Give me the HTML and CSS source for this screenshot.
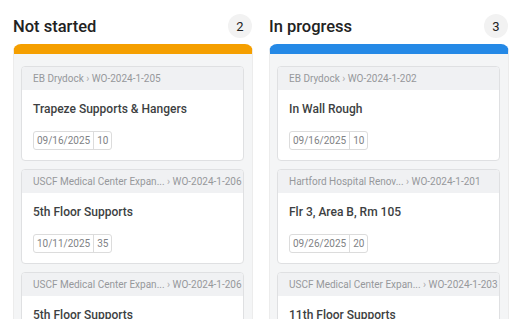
FILE: index.html
```html
<!DOCTYPE html>
<html lang="en">
  <head>
    <meta charset="UTF-8" />
    <meta name="viewport" content="width=device-width, initial-scale=1.0" />
    <title>Work orders</title>
    <link rel="stylesheet" href="styles.css">
  </head>
  <body>
    <div class="board">
      <!-- Not started -->
      <div class="column">
        <div class="column-head">
          <h2>Not started</h2>
          <span class="count">2</span>
        </div>
        <div class="lane lane-orange">
          <div class="card">
            <div class="card-path">EB Drydock <span class="sep">›</span> WO-2024-1-205</div>
            <div class="card-body">
              <div class="card-title">Trapeze Supports &amp; Hangers</div>
              <div class="chip"><span>09/16/2025</span><span>10</span></div>
            </div>
          </div>
          <div class="card">
            <div class="card-path">USCF Medical Center Expan... <span class="sep">›</span> WO-2024-1-206</div>
            <div class="card-body">
              <div class="card-title">5th Floor Supports</div>
              <div class="chip"><span>10/11/2025</span><span>35</span></div>
            </div>
          </div>
          <div class="card">
            <div class="card-path">USCF Medical Center Expan... <span class="sep">›</span> WO-2024-1-206</div>
            <div class="card-body">
              <div class="card-title">5th Floor Supports</div>
              <div class="chip"><span>10/11/2025</span><span>35</span></div>
            </div>
          </div>
        </div>
      </div>

      <!-- In progress -->
      <div class="column">
        <div class="column-head">
          <h2>In progress</h2>
          <span class="count">3</span>
        </div>
        <div class="lane lane-blue">
          <div class="card">
            <div class="card-path">EB Drydock <span class="sep">›</span> WO-2024-1-202</div>
            <div class="card-body">
              <div class="card-title">In Wall Rough</div>
              <div class="chip"><span>09/16/2025</span><span>10</span></div>
            </div>
          </div>
          <div class="card">
            <div class="card-path">Hartford Hospital Renov... <span class="sep">›</span> WO-2024-1-201</div>
            <div class="card-body">
              <div class="card-title">Flr 3, Area B, Rm 105</div>
              <div class="chip"><span>09/26/2025</span><span>20</span></div>
            </div>
          </div>
          <div class="card">
            <div class="card-path">USCF Medical Center Expan... <span class="sep">›</span> WO-2024-1-203</div>
            <div class="card-body">
              <div class="card-title">11th Floor Supports</div>
              <div class="chip"><span>11/02/2025</span><span>25</span></div>
            </div>
          </div>
        </div>
      </div>
    </div>
  </body>
</html>
```

FILE: styles.css
```css
html,
body {
  margin: 0;
  height: 100%;
  overflow: hidden;
  background-color: #fff;
  font-family: Roboto, "Liberation Sans", sans-serif;
}

/* two lanes side by side */
.board {
  display: flex;
  gap: 16px;
  padding: 12px 0 0 13px;
}

.column {
  width: 240px;
  flex-shrink: 0;
}

.column-head {
  display: flex;
  align-items: center;
  justify-content: space-between;
  height: 28px;
  margin-bottom: 4px;
}

h2 {
  margin: 0;
  font-size: 16.5px;
  font-weight: 500;
  color: #222;
}

.count {
  width: 24px;
  height: 24px;
  margin-right: 1px;
  border-radius: 50%;
  background-color: #f2f2f2;
  color: #222;
  font-size: 13px;
  display: flex;
  align-items: center;
  justify-content: center;
}

.lane {
  display: flex;
  flex-direction: column;
  gap: 8px;
  padding: 12px 8px 12px 7px;
  background-color: #f4f5f6;
  border: 1px solid #ececec;
  border-top: 10px solid #f59f00;
  border-radius: 8px 8px 0 0;
  height: 400px;
}

.lane-blue {
  border-top-color: #2589e6;
}

.card {
  flex-shrink: 0;
  background-color: #fff;
  border: 1px solid #dfe0e2;
  border-radius: 4px;
  overflow: hidden;
}

.card-path {
  height: 23px;
  line-height: 23px;
  padding: 0 11px;
  background-color: #f0f1f3;
  color: #96989b;
  font-size: 10px;
  white-space: nowrap;
}

.sep {
  color: #aaa;
}

.card-body {
  padding: 11px 11px 10px 11px;
}

.card-title {
  font-size: 12px;
  font-weight: 500;
  color: #3d3f42;
  line-height: 16px;
  margin-bottom: 14px;
}

.chip {
  display: flex;
  width: fit-content;
  border: 1px solid #dcdcdc;
  border-radius: 3px;
  font-size: 10px;
  color: #808285;
}

.chip span {
  padding: 0 3px;
  line-height: 17px;
}

.chip span + span {
  border-left: 1px solid #dcdcdc;
}
```
